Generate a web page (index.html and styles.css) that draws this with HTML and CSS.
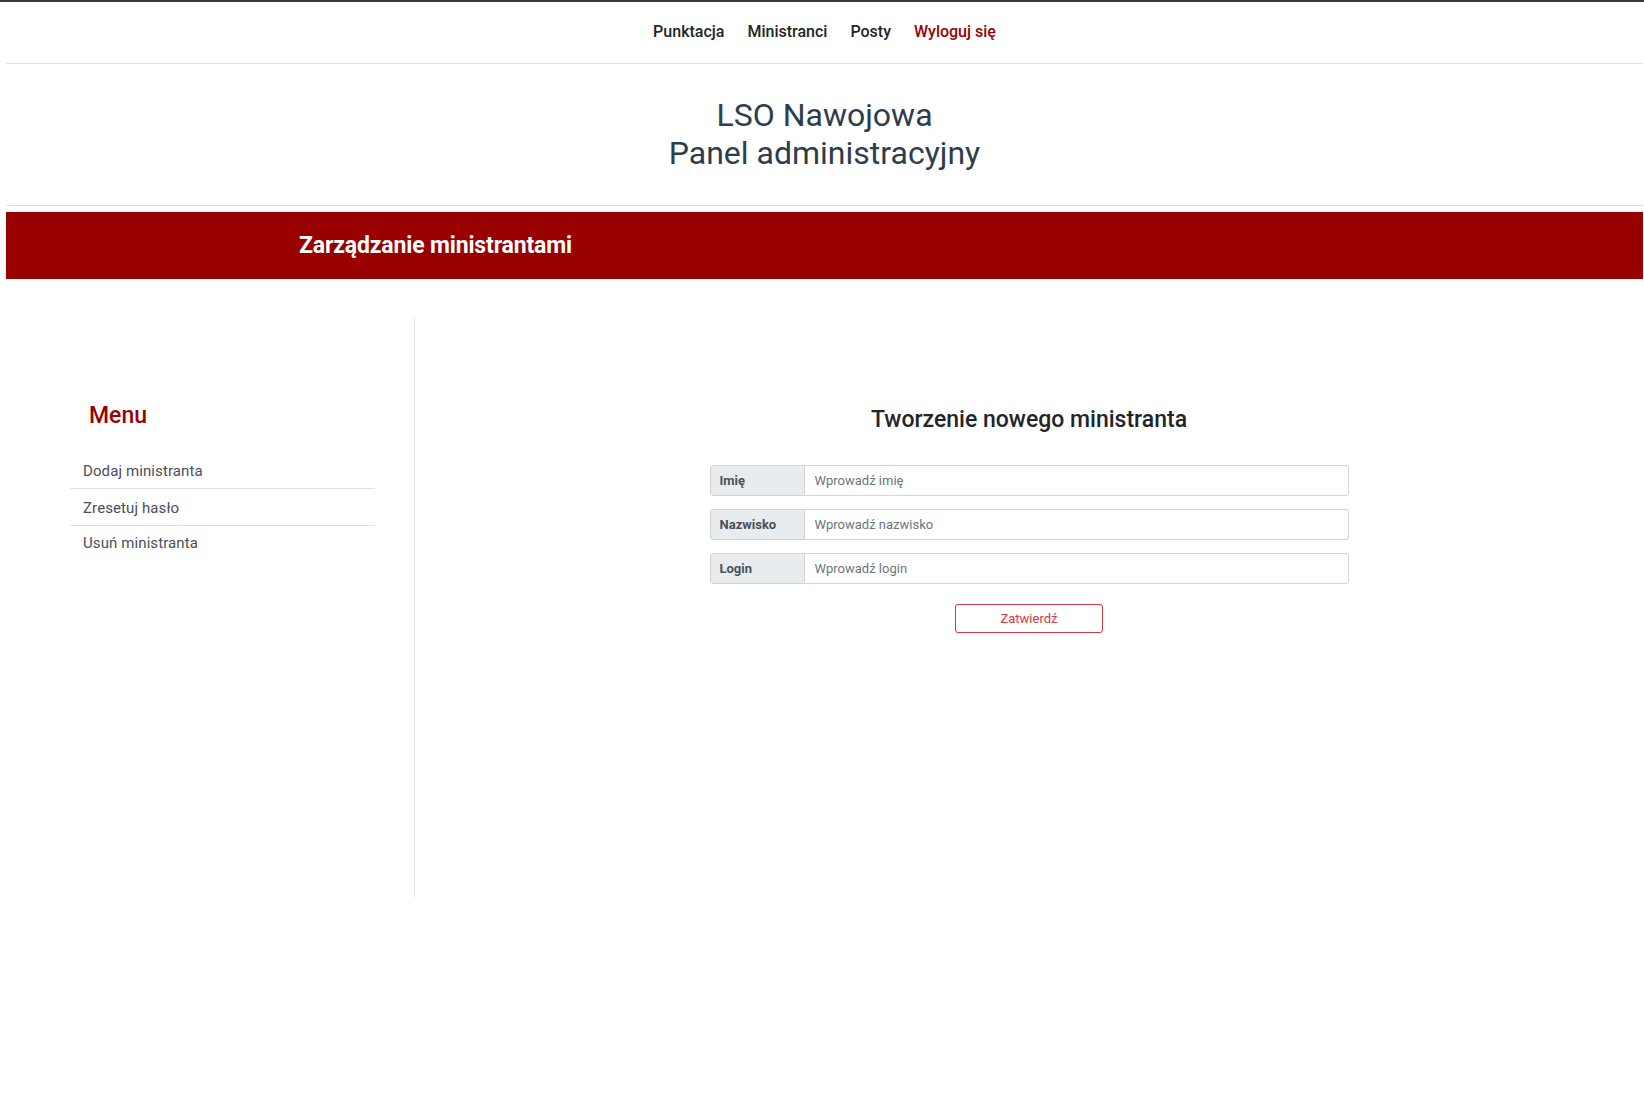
FILE: index.html
```html
<!DOCTYPE html>
<html lang="pl">
<head>
    <meta charset="UTF-8">
    <meta name="viewport" content="width=device-width, initial-scale=1.0">
    <title>LSO Nawojowa - Panel administracyjny</title>
    <link rel="stylesheet" href="styles.css">
</head>
<body>
    <div class="page">
        <header class="site-nav">
            <nav>
                <a href="#">Punktacja</a>
                <a href="#">Ministranci</a>
                <a href="#">Posty</a>
                <a href="#" class="logout">Wyloguj się</a>
            </nav>
        </header>
        <div class="site-title">
            <h1>LSO Nawojowa<br>Panel administracyjny</h1>
        </div>
        <div class="banner">
            <h2>Zarządzanie ministrantami</h2>
        </div>
        <div class="content">
            <aside class="sidebar">
                <h3 class="menu-title">Menu</h3>
                <ul class="menu-list">
                    <li><a href="#">Dodaj ministranta</a></li>
                    <li><a href="#">Zresetuj hasło</a></li>
                    <li><a href="#">Usuń ministranta</a></li>
                </ul>
            </aside>
            <main class="main">
                <h3 class="form-title">Tworzenie nowego ministranta</h3>
                <form class="new-form">
                    <div class="input-group">
                        <span class="input-label">Imię</span>
                        <input type="text" placeholder="Wprowadź imię">
                    </div>
                    <div class="input-group">
                        <span class="input-label">Nazwisko</span>
                        <input type="text" placeholder="Wprowadź nazwisko">
                    </div>
                    <div class="input-group">
                        <span class="input-label">Login</span>
                        <input type="text" placeholder="Wprowadź login">
                    </div>
                    <button type="button" class="submit-btn">Zatwierdź</button>
                </form>
            </main>
        </div>
    </div>
</body>
</html>
```
FILE: styles.css
```css
body {
    font-family: Roboto, "Liberation Sans", Arial, sans-serif;
    margin: 0;
    padding: 0;
    border-top: 2px solid #3a3a3a;
    background-color: #fff;
    color: #212529;
}
.page {
    margin: 0 1px 0 6px;
}
.site-nav {
    border-bottom: 1px solid #dee2e6;
    padding: 18px 0 19px;
}
.site-nav nav {
    display: flex;
    justify-content: center;
    gap: 23px;
}
.site-nav a {
    color: #212529;
    text-decoration: none;
    font-size: 16px;
    font-weight: 500;
    line-height: 24px;
}
.site-nav a.logout {
    color: #990000;
}
.site-title {
    border-bottom: 1px solid #dee2e6;
    padding: 32px 0;
    text-align: center;
}
.site-title h1 {
    margin: 0;
    font-size: 32px;
    font-weight: 400;
    line-height: 1.2;
    color: #2e3d4d;
}
.banner {
    margin-top: 6px;
    background-color: #990000;
    height: 67px;
    display: flex;
    align-items: center;
    padding-left: 293px;
}
.banner h2 {
    margin: 0;
    color: #fff;
    font-size: 23px;
    font-weight: 700;
    letter-spacing: -0.15px;
}
.content {
    display: flex;
    margin-top: 38px;
    min-height: 580px;
}
.sidebar {
    width: 409px;
    border-right: 1px solid #dee2e6;
    padding-top: 85px;
    box-sizing: border-box;
    flex-shrink: 0;
}
.menu-title {
    margin: 0 0 21px 83px;
    font-size: 23px;
    font-weight: 500;
    line-height: 1.25;
    color: #990000;
}
.menu-list {
    list-style: none;
    margin: 0 39px 0 64px;
    padding: 0;
}
.menu-list li {
    border-bottom: 1px solid #dee2e6;
}
.menu-list li:last-child {
    border-bottom: none;
}
.menu-list a {
    display: block;
    padding: 8px 13px 6px;
    font-size: 15px;
    letter-spacing: 0.1px;
    line-height: 22px;
    color: #495057;
    text-decoration: none;
}
.menu-list li:last-child a {
    padding-top: 6px;
}
.main {
    flex: 1;
    padding-top: 89px;
    display: flex;
    flex-direction: column;
    align-items: center;
}
.form-title {
    margin: 0 0 32px;
    font-size: 23px;
    font-weight: 500;
    line-height: 1.2;
    color: #212529;
}
.new-form {
    width: 639px;
    display: flex;
    flex-direction: column;
    align-items: center;
}
.input-group {
    display: flex;
    width: 100%;
    height: 31px;
    margin-bottom: 13px;
}
.input-label {
    width: 95px;
    box-sizing: border-box;
    display: flex;
    align-items: center;
    padding: 0 9px;
    background-color: #e9ecef;
    border: 1px solid #ced4da;
    border-radius: 3px 0 0 3px;
    font-size: 13px;
    font-weight: 700;
    color: #495057;
}
.input-group input {
    flex: 1;
    border: 1px solid #ced4da;
    border-left: none;
    border-radius: 0 3px 3px 0;
    padding: 0 10px;
    font-family: inherit;
    font-size: 13px;
    color: #495057;
    outline: none;
}
.input-group input::placeholder {
    color: #6c757d;
}
.submit-btn {
    margin-top: 7px;
    width: 148px;
    height: 29px;
    background-color: #fff;
    border: 1px solid #dc3545;
    border-radius: 3px;
    color: #dc3545;
    font-family: inherit;
    font-size: 13px;
    cursor: pointer;
}
```
